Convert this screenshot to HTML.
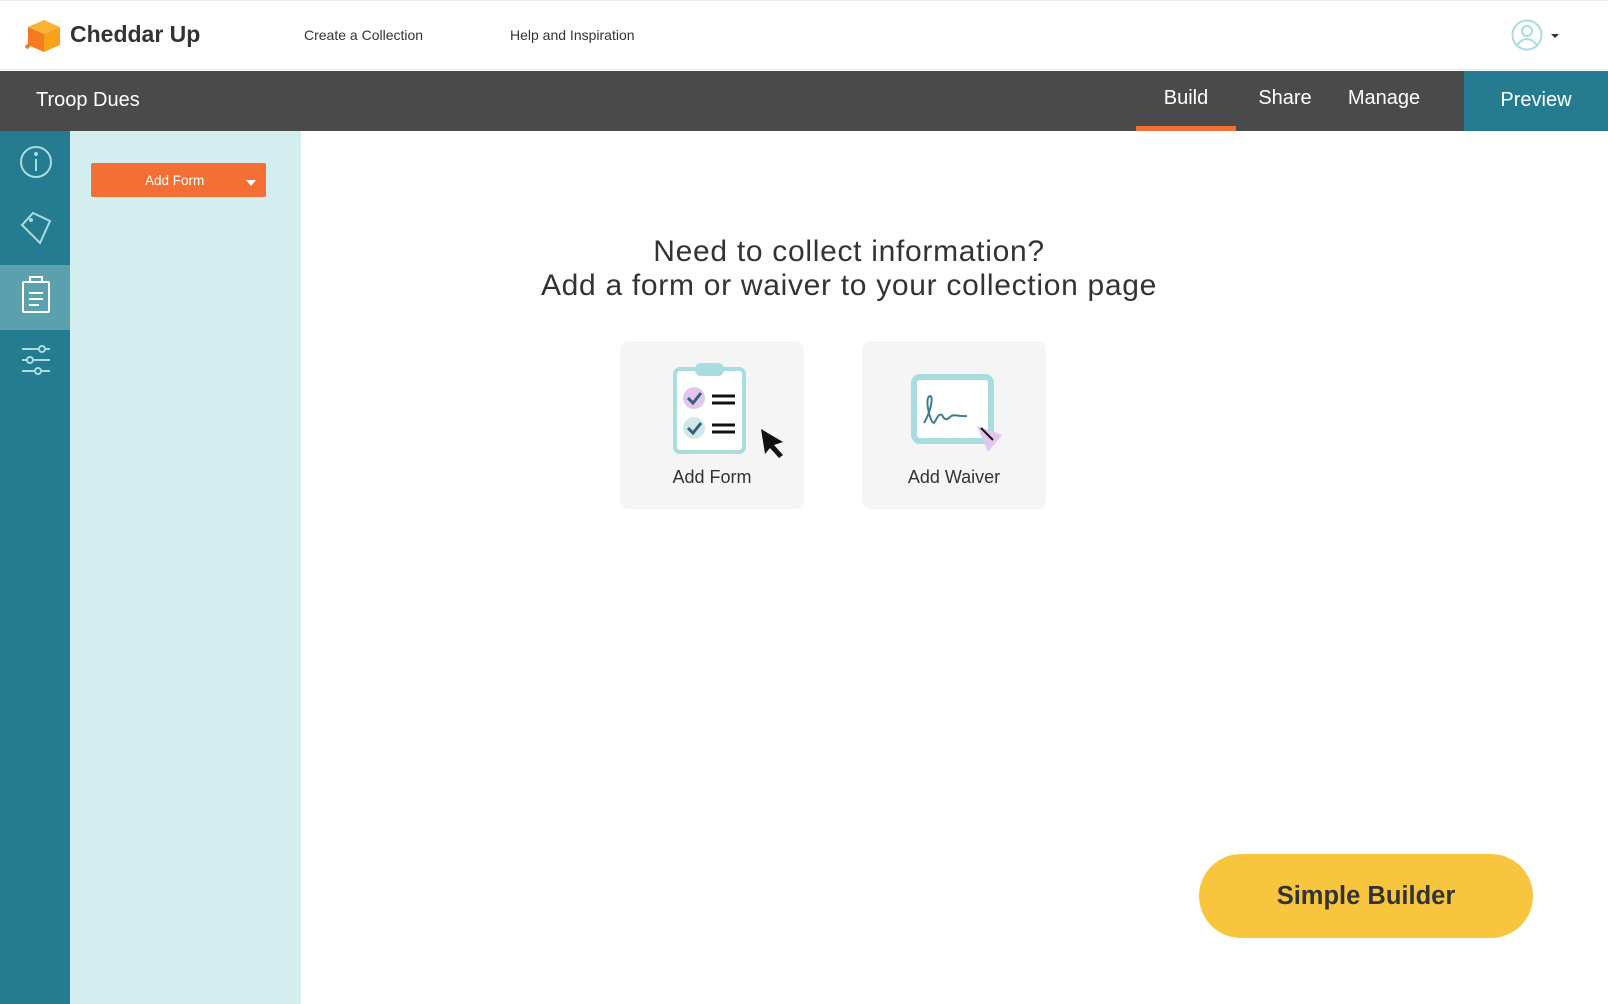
<!DOCTYPE html>
<html><head><meta charset="utf-8"><style>
*{margin:0;padding:0;box-sizing:border-box}
body{width:1608px;height:1004px;overflow:hidden;font-family:"Liberation Sans",sans-serif;background:#fff;position:relative;color:#333}
.abs{position:absolute}
</style></head><body>
<div class="abs" style="left:0;top:0;width:1608px;height:70px;background:#fff;border-bottom:1px solid #e6e6e6;border-top:1px solid #eee"></div>
<svg class="abs" style="left:24px;top:18px" width="40" height="36" viewBox="0 0 40 36">
<polygon points="20,2 36,9 20,16 4,9" fill="#f9b233"/>
<polygon points="4,9 20,16 20,34 4,27" fill="#f47b20"/>
<polygon points="36,9 20,16 20,34 36,27" fill="#f7a21b"/>
<path d="M2 30 L12 20" stroke="#f47b20" stroke-width="4"/>
</svg>
<div class="abs" style="left:70px;top:21px;font-size:23px;font-weight:bold;color:#333">Cheddar Up</div>
<div class="abs" style="left:304px;top:27px;font-size:14px;color:#333">Create a Collection</div>
<div class="abs" style="left:510px;top:27px;font-size:14px;color:#333">Help and Inspiration</div>
<svg class="abs" style="left:1511px;top:19px" width="48" height="32" viewBox="0 0 48 32">
<circle cx="16" cy="16" r="14.5" fill="none" stroke="#a9dcdf" stroke-width="2"/>
<circle cx="16" cy="12" r="5" fill="none" stroke="#a9dcdf" stroke-width="2"/>
<path d="M6 26 Q16 14 26 26" fill="none" stroke="#a9dcdf" stroke-width="2"/>
<polygon points="40,15 48,15 44,19" fill="#333"/>
</svg>
<div class="abs" style="left:0;top:71px;width:1608px;height:60px;background:#4a4a4a"></div>
<div class="abs" style="left:36px;top:89px;font-size:20px;color:#fff">Troop Dues</div>
<div class="abs" style="left:1136px;top:87px;width:100px;text-align:center;font-size:20px;color:#fff">Build</div>
<div class="abs" style="left:1136px;top:126px;width:100px;height:5px;background:#f36f33"></div>
<div class="abs" style="left:1245px;top:87px;width:80px;text-align:center;font-size:20px;color:#fff">Share</div>
<div class="abs" style="left:1339px;top:87px;width:90px;text-align:center;font-size:20px;color:#fff">Manage</div>
<div class="abs" style="left:1464px;top:71px;width:144px;height:60px;background:#257b8f;color:#fff;font-size:20px;text-align:center;line-height:58px">Preview</div>
<div class="abs" style="left:0;top:131px;width:70px;height:873px;background:#257b8f"></div>
<div class="abs" style="left:0;top:265px;width:70px;height:65px;background:#5ba0ad"></div>
<svg class="abs" style="left:0;top:131px" width="70" height="260" viewBox="0 0 70 260" fill="none" stroke="#a9dcdf" stroke-width="2">
<circle cx="36" cy="31" r="15"/><line x1="36" y1="28" x2="36" y2="40"/><circle cx="36" cy="23" r="1" fill="#a9dcdf"/>
<path d="M22 94 L33 82 L50 90 L40 112 Z"/><circle cx="31" cy="89" r="1" fill="#a9dcdf"/>
<rect x="23" y="151" width="26" height="30" rx="1" stroke="#fff"/><path d="M30 151 V146 H42 V151" stroke="#fff"/><path d="M29 162 H43 M29 168 H43 M29 174 H39" stroke="#fff"/>
<path d="M22 218 H50 M22 229 H50 M22 240 H50"/><circle cx="42" cy="218" r="3" fill="#257b8f"/><circle cx="30" cy="229" r="3" fill="#257b8f"/><circle cx="38" cy="240" r="3" fill="#257b8f"/>
</svg>
<div class="abs" style="left:70px;top:131px;width:231px;height:873px;background:#d4eeef"></div>
<div class="abs" style="left:91px;top:163px;width:175px;height:34px;background:#f36f33;border-radius:2px;color:#fff;font-size:13.5px;line-height:35px;padding-left:54px">Add Form</div>
<div class="abs" style="left:246px;top:180px;border-left:5px solid transparent;border-right:5px solid transparent;border-top:6px solid #fff"></div>
<div class="abs" style="left:399px;top:235px;width:900px;text-align:center;font-size:30px;letter-spacing:0.7px;line-height:34px;color:#333">Need to collect information?<br>Add a form or waiver to your collection page</div>
<div class="abs" style="left:620px;top:341px;width:184px;height:168px;background:#f5f5f5;border-radius:9px"></div>
<div class="abs" style="left:862px;top:341px;width:184px;height:168px;background:#f5f5f5;border-radius:9px"></div>
<svg class="abs" style="left:620px;top:341px" width="184" height="120" viewBox="0 0 184 120">
<rect x="55" y="28" width="69" height="83" rx="5" fill="#fff" stroke="#a9dcdf" stroke-width="4"/>
<rect x="75" y="22" width="29" height="13" rx="6" fill="#a9dcdf"/>
<circle cx="74" cy="57" r="11" fill="#e3c6ee"/><circle cx="74" cy="87" r="11" fill="#d0e8ea"/>
<path d="M68 57 L73 62 L81 52 M68 87 L73 92 L81 82" fill="none" stroke="#35607a" stroke-width="3"/>
<path d="M92 55 H115 M92 62 H115 M92 84 H115 M92 91 H115" stroke="#111" stroke-width="3"/>
<path d="M141 88 L163 101 L154 104 L163 114 L159 117 L150 107 L145 113 Z" fill="#111"/>
</svg>
<svg class="abs" style="left:862px;top:341px" width="184" height="120" viewBox="0 0 184 120">
<rect x="52" y="36" width="77" height="64" rx="6" fill="#fff" stroke="#a9dcdf" stroke-width="6"/>
<path d="M62 82 C68 72 72 56 68 55 C62 56 68 82 72 82 C75 78 76 72 80 74 C82 78 84 80 88 76 C92 72 96 76 105 75" fill="none" stroke="#3b7f8e" stroke-width="2"/>
<polygon points="115,85 140,94 126,111" fill="#e3c6ee"/>
<path d="M119 87 L131 99" stroke="#111" stroke-width="2"/>
</svg>
<div class="abs" style="left:620px;top:467px;width:184px;text-align:center;font-size:18px;color:#333">Add Form</div>
<div class="abs" style="left:862px;top:467px;width:184px;text-align:center;font-size:18px;color:#333">Add Waiver</div>
<div class="abs" style="left:1199px;top:854px;width:334px;height:84px;border-radius:42px;background:#f8c53e;text-align:center;line-height:84px;font-size:25.5px;font-weight:bold;color:#333">Simple Builder</div>
</body></html>
